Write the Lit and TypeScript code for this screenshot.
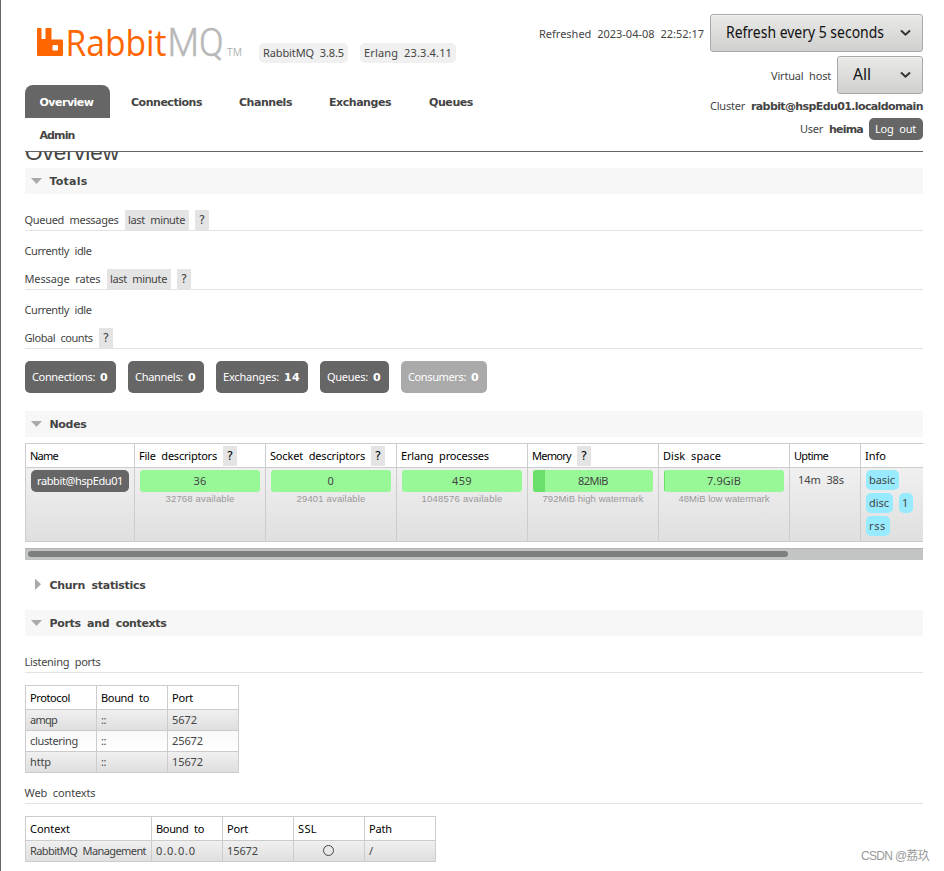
import { LitElement, html, css, nothing } from "lit";
import { customElement, property } from "lit/decorators.js";
import { classMap } from "lit/directives/class-map.js";

/** A single line of text fitted to an exact width, by tracking or by narrowing its letters. */
@customElement("fit-text")
class FitText extends LitElement {
  @property({ type: Number }) w = 0;
  @property() text = "";
  @property({ type: Boolean }) narrow = false;

  static styles = css`
    :host { display: inline-block; flex: none; white-space: nowrap; word-spacing: var(--gap, 3px); }
    .run { display: inline-block; transform-origin: 0 50%; }
  `;

  updated() {
    const run = this.renderRoot.querySelector(".run") as HTMLElement;
    run.style.letterSpacing = "0px";
    run.style.transform = "none";
    const natural = run.getBoundingClientRect().width;
    if (this.narrow) run.style.transform = `scaleX(${this.w / natural})`;
    else run.style.letterSpacing = (this.w - natural) / Math.max(1, this.text.length) + "px";
    this.style.width = this.w + "px";
  }

  render() {
    return html`<span class="run">${this.text}</span>`;
  }
}

const t = (text: string, w: number, cls = "", narrow = false) =>
  html`<fit-text class=${cls} .text=${text} .w=${w} .narrow=${narrow}></fit-text>`;

const help = html`<span class="chip q">?</span>`;

const tabs: [string, number][] = [
  ["Overview", 54], ["Connections", 71], ["Channels", 53],
  ["Exchanges", 62], ["Queues", 44], ["Admin", 35],
];

const counts = [
  { label: "Connections:", w: 63, n: "0", nw: 8, box: 91 },
  { label: "Channels:", w: 48, n: "0", nw: 8, box: 76 },
  { label: "Exchanges:", w: 56, n: "14", nw: 16, box: 92 },
  { label: "Queues:", w: 41, n: "0", nw: 8, box: 69 },
  { label: "Consumers:", w: 58, n: "0", nw: 8, box: 86, off: true },
];

const nodeHeads: [string, number, boolean][] = [
  ["Name", 28, false], ["File descriptors", 78, true], ["Socket descriptors", 95, true],
  ["Erlang processes", 88, false], ["Memory", 39, true], ["Disk space", 58, false],
  ["Uptime", 34, false], ["Info", 21, false],
];

const gauges = [
  { v: "36", w: 13, used: 0, note: "32768 available", nw: 69 },
  { v: "0", w: 7, used: 0, note: "29401 available", nw: 69 },
  { v: "459", w: 20, used: 0, note: "1048576 available", nw: 81 },
  { v: "82MiB", w: 30, used: 10, note: "792MiB high watermark", nw: 101 },
  { v: "7.9GiB", w: 34, used: 0.9, note: "48MiB low watermark", nw: 91 },
];

const ports: [string, number, string, number][] = [
  ["amqp", 27, "5672", 25],
  ["clustering", 48, "25672", 31],
  ["http", 21, "15672", 31],
];

@customElement("app-root")
class AppRoot extends LitElement {
  static styles = css`
    :host {
      display: block; position: relative; box-sizing: border-box; height: 871px; overflow: hidden;
      padding: 0 21px 0 24px; border-left: 1px solid #666; background: #fff; color: #444;
      font: 11px/20px "Noto Sans", "Open Sans", sans-serif;
    }
    .bold { font-family: "DejaVu Sans", sans-serif; font-weight: 700; }
    .header { display: flex; justify-content: space-between; height: 151px; border-bottom: 1px solid #666; }
    .brand { display: flex; align-items: flex-start; padding-top: 24px; height: 61px; box-sizing: border-box; }
    .logo { display: block; width: 234px; height: 40px; flex: none; overflow: visible; }
    .logo text { font-family: "Open Sans", sans-serif; }
    .logo .mq { font-family: Roboto, sans-serif; }
    .version { margin-top: 19px; height: 20px; padding: 0 4px; border-radius: 5px; background: #f0f0f0; box-sizing: border-box; }
    .v1 { width: 89px; margin-right: 12px; }
    .v2 { width: 96px; }
    .tabs { display: grid; grid-template-columns: 91.5px 108px 90px 100px 80px; margin-top: 24px; }
    .tab { width: 85px; height: 33px; line-height: 36px; padding-left: 14.5px; box-sizing: border-box; white-space: nowrap; }
    .tab.on { background: #666; color: #fff; border-radius: 8px 8px 0 0; }
    .side { display: flex; flex-direction: column; align-items: flex-end; padding-top: 14px; }
    .line { display: flex; align-items: center; }
    .line + .line { margin-top: 4px; }
    .line > .lead { padding-top: 1px; }
    .select {
      display: flex; justify-content: space-between; align-items: center; box-sizing: border-box; height: 38px;
      margin-left: 6px; padding: 0 11px 0 15px; border: 1px solid #a9a9a7; border-radius: 3px;
      background: linear-gradient(#e9e9e8, #d0d0ce); box-shadow: inset 0 1px #f3f3f2;
      color: #111; font-size: 15.5px; --gap: 0px;
    }
    .select .value { margin-top: -2px; }
    .select svg { display: block; width: 12px; height: 8px; }
    .s1 { width: 213px; }
    .s2 { width: 86px; }
    .line.cluster { margin-top: 2px; gap: 6px; height: 20px; }
    .line.user { margin-top: 2px; height: 22px; gap: 6px; }
    .line .bold { padding-top: 2px; }
    .logout { width: 54px; height: 22px; line-height: 22px; padding-left: 6px; box-sizing: border-box; border-radius: 5px; background: #666; color: #fff; }
    .title { display: flex; align-items: flex-end; height: 16px; overflow: hidden; }
    .title span { font: 22px/30px "Liberation Sans", sans-serif; }
    .section { display: flex; align-items: center; height: 26px; padding-left: 6px; background: #f7f7f7; line-height: 24px; }
    .section fit-text { padding-top: 2px; }
    .section svg { display: block; width: 12px; height: 12px; margin-right: 6.500px; }
    .section.closed { background: none; }
    .sub { display: flex; height: 20px; border-bottom: 1px solid #e2e2e2; }
    .sub .chip { margin-left: 6px; }
    .sub > .lead { margin-left: -0.5px; margin-right: 0.5px; }
    .chip { display: inline-block; height: 20px; padding: 0 3px; box-sizing: border-box; background: #e4e4e4; flex: none; }
    .chip.m { width: 64px; }
    .chip.q { width: 14px; padding: 0; text-align: center; font-family: "DejaVu Sans"; font-size: 12px; }
    .idle { height: 20px; margin: 10px 0 8px -0.5px; }
    .counts { display: flex; gap: 12px; margin: 12px 0 18px; }
    .count { display: flex; justify-content: space-between; box-sizing: border-box; height: 32px; padding: 0 8px 0 7px; line-height: 32px; border-radius: 5px; background: #666; color: #fff; }
    .count .bold { line-height: 34px; }
    .count.off { background: #aaa; }
    .scroll { margin-top: 6px; overflow: hidden; }
    .grid { display: grid; width: max-content; background: #ccc; gap: 1px; padding: 1px; }
    .nodes { grid-template-columns: 108px repeat(5, 130px) 70px 80px; grid-template-rows: 23px 73px; }
    .ports { grid-template-columns: repeat(3, 70px); grid-template-rows: 23px; grid-auto-rows: 20px; margin: 12px 0 10px; }
    .contexts { grid-template-columns: 125px repeat(4, 70px); grid-template-rows: 23px 20px; margin-top: 12px; }
    .th { background: #fff; color: #000; padding-left: 4px; line-height: 24px; display: flex; align-items: center; }
    .th .chip { margin-left: 6px; line-height: 20px; }
    .td { background: linear-gradient(#f0f0f0, #dfdfdf); padding-left: 4px; line-height: 20px; white-space: nowrap; }
    .td.even { background: linear-gradient(#f8f8f8, #fff); }
    .node { margin: 2px 0 0 1px; width: 98px; height: 22px; line-height: 22px; padding-left: 6px; box-sizing: border-box; border-radius: 5px; background: #666; color: #fff; }
    .gauge { display: flex; flex-direction: column; align-items: center; padding: 2px 5px 0; }
    .bar { display: grid; width: 120px; height: 22px; line-height: 22px; border-radius: 3px; overflow: hidden; background: #98f898; }
    .fill, .amount { grid-area: 1 / 1; }
    .fill { background: #6ae06a; }
    .amount { text-align: center; }
    .note { font: 9.5px/13px "Liberation Sans", sans-serif; color: #999; --gap: 0px; }
    .uptime { padding: 2px 0 0 8px; }
    .tags { display: flex; flex-wrap: wrap; align-content: flex-start; gap: 3px 6px; padding: 2px 24px 0 5px; line-height: 20px; }
    .tag { height: 20px; border-radius: 5px; background: #98ebff; padding: 0 4px 0 3px; box-sizing: border-box; }
    .track { height: 12px; margin: 6px 0 12px; padding: 2px 3px 3px; box-sizing: border-box; background: #c3c5c4; border-top: 1px solid #b2b4b3; }
    .thumb { width: 760px; height: 6px; border-radius: 3px; background: #7c7f7e; }
    .ssl { display: flex; align-items: center; justify-content: center; padding: 0 2px 1px 0; }
    .ring { width: 9px; height: 9px; border: 1px solid #444; border-radius: 50%; }
    .gap12 { height: 12px; }
    .gap16 { height: 16px; }
    .mark { position: absolute; right: 15px; bottom: 5px; font: 12px/20px "Liberation Sans", "Noto Sans CJK SC", sans-serif; color: #999; --gap: 0px; }
  `;

  section(text: string, w: number, open = true) {
    return html`<div class=${classMap({ section: true, bold: true, closed: !open })}>
      <svg viewBox="0 0 12 12"><path fill="#aaa" d=${open ? "M0 3H11L5.5 9Z" : "M4 -0.5V11L10 5.2Z"}></path></svg>
      ${t(text, w)}
    </div>`;
  }

  chevron() {
    return html`<svg viewBox="0 0 12 8"><path d="M2 1.5L6.500 5.700L11 1.5" fill="none" stroke="#333" stroke-width="2"></path></svg>`;
  }

  render() {
    return html`
      <div class="header">
        <div>
          <div class="brand">
            <svg class="logo" viewBox="0 0 234 40">
              <path fill="#f60" d="M13 4h2.500q1 0 1 1v10h4v-10q0-1 1-1h4q1 0 1 1v10.500h10.500q1 0 1 1v14.500q0 1-1 1h-24q-1 0-1-1v-26q0-1 1-1zM28.500 21q-1 0-1 1v3.500q0 1 1 1h3.500q1 0 1-1v-3.500q0-1-1-1z" fill-rule="evenodd"></path>
              <text x="40.500" y="32" font-size="37" fill="#f60" textLength="101" lengthAdjust="spacingAndGlyphs">Rabbit</text>
              <text class="mq" x="142.500" y="32" font-size="38" fill="#b8b8b8" stroke="#b8b8b8" stroke-width="0.5" font-weight="300" textLength="56" lengthAdjust="spacingAndGlyphs">MQ</text>
              <text x="202" y="32" font-size="10" fill="#b0b0b0" textLength="15" lengthAdjust="spacingAndGlyphs">TM</text>
            </svg>
            <span class="version v1">${t("RabbitMQ 3.8.5", 81)}</span>
            <span class="version v2">${t("Erlang 23.3.4.11", 88)}</span>
          </div>
          <div class="tabs bold">
            ${tabs.map(([n, w], i) => html`<div class=${classMap({ tab: true, on: i === 0 })}>${t(n, w)}</div>`)}
          </div>
        </div>
        <div class="side">
          <div class="line">${t("Refreshed 2023-04-08 22:52:17", 165, "lead")}
            <div class="select s1">${t("Refresh every 5 seconds", 158, "value", true)}${this.chevron()}</div></div>
          <div class="line">${t("Virtual host", 60, "lead")}
            <div class="select s2">${t("All", 18, "value", true)}${this.chevron()}</div></div>
          <div class="line cluster">${t("Cluster", 35)}${t("rabbit@hspEdu01.localdomain", 172, "bold")}</div>
          <div class="line user">${t("User", 23)}${t("heima", 34, "bold")}<div class="logout">${t("Log out", 41)}</div></div>
        </div>
      </div>
      <div class="title"><span>${t("Overview", 94, "", true)}</span></div>

      ${this.section("Totals", 38)}
      <div class="gap16"></div>
      <div class="sub">${t("Queued messages", 94, "lead")}<span class="chip m">${t("last minute", 57)}</span>${help}</div>
      <div class="idle">${t("Currently idle", 67)}</div>
      <div class="sub">${t("Message rates", 76, "lead")}<span class="chip m">${t("last minute", 57)}</span>${help}</div>
      <div class="idle">${t("Currently idle", 67)}</div>
      <div class="sub">${t("Global counts", 68, "lead")}${help}</div>
      <div class="counts">
        ${counts.map((c) => html`<div class=${classMap({ count: true, off: !!c.off })} style="width:${c.box}px">
          ${t(c.label, c.w)}${t(c.n, c.nw, "bold")}</div>`)}
      </div>

      ${this.section("Nodes", 37)}
      <div class="scroll">
        <div class="grid nodes">
          ${nodeHeads.map(([n, w, q]) => html`<div class="th">${t(n, w)}${q ? help : nothing}</div>`)}
          <div class="td"><div class="node">${t("rabbit@hspEdu01", 86)}</div></div>
          ${gauges.map((g) => html`<div class="td gauge">
            <div class="bar"><div class="fill" style="width:${g.used}%"></div><div class="amount">${t(g.v, g.w)}</div></div>
            ${t(g.note, g.nw, "note")}
          </div>`)}
          <div class="td uptime">${t("14m 38s", 46)}</div>
          <div class="td tags">
            <span class="tag">${t("basic", 26)}</span>
            <span class="tag">${t("disc", 20)}</span>
            <span class="tag">${t("1", 7)}</span>
            <span class="tag">${t("rss", 17)}</span>
          </div>
        </div>
      </div>
      <div class="track"><div class="thumb"></div></div>

      ${this.section("Churn statistics", 96, false)}
      <div class="gap12"></div>
      ${this.section("Ports and contexts", 117)}
      <div class="gap16"></div>
      <div class="sub">${t("Listening ports", 76, "lead")}</div>
      <div class="grid ports">
        <div class="th">${t("Protocol", 40)}</div><div class="th">${t("Bound to", 48)}</div><div class="th">${t("Port", 21)}</div>
        ${ports.map(([p, pw, n, nw], i) => {
          const c = classMap({ td: true, even: i % 2 === 1 });
          return html`<div class=${c}>${t(p, pw)}</div><div class=${c}>${t("::", 5)}</div><div class=${c}>${t(n, nw)}</div>`;
        })}
      </div>
      <div class="sub">${t("Web contexts", 71, "lead")}</div>
      <div class="grid contexts">
        <div class="th">${t("Context", 40)}</div><div class="th">${t("Bound to", 48)}</div><div class="th">${t("Port", 21)}</div>
        <div class="th">${t("SSL", 19)}</div><div class="th">${t("Path", 23)}</div>
        <div class="td">${t("RabbitMQ Management", 116)}</div><div class="td">${t("0.0.0.0", 40)}</div><div class="td">${t("15672", 31)}</div>
        <div class="td ssl"><span class="ring"></span></div><div class="td">${t("/", 5)}</div>
      </div>
      <div class="mark">${t("CSDN @荔玖", 68)}</div>
    `;
  }
}
